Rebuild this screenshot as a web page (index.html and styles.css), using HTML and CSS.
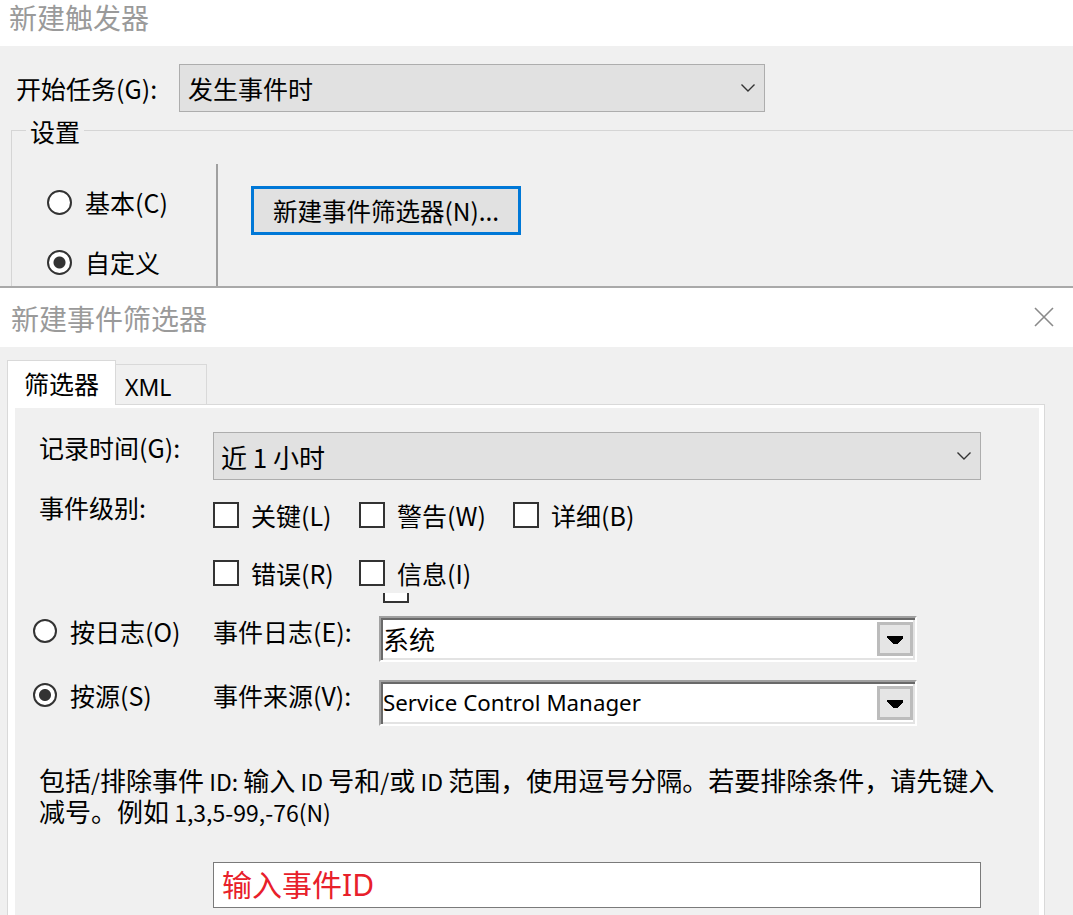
FILE: index.html
```html
<!DOCTYPE html>
<html lang="zh-CN">
<head>
<meta charset="utf-8">
<title>新建事件筛选器</title>
<link rel="stylesheet" href="styles.css">
</head>
<body>
<div class="win1">
  <div class="win1-title">新建触发器</div>
  <div class="win1-body">
    <div class="start-row">
      <span class="start-label">开始任务(G):</span>
      <div class="combo combo-start">
        <span>发生事件时</span>
        <svg class="chev" width="14" height="8" viewBox="0 0 14 8"><polyline points="0.5,0.5 7,7 13.5,0.5" fill="none" stroke="#333" stroke-width="1.4"/></svg>
      </div>
    </div>
    <div class="group">
      <div class="group-title">设置</div>
      <div class="group-body">
        <div class="radio-col">
          <div class="radio"><span class="circle"></span>基本(C)</div>
          <div class="radio"><span class="circle checked"></span>自定义</div>
        </div>
        <div class="group-right">
          <div class="btn-new">新建事件筛选器(N)...</div>
        </div>
      </div>
    </div>
  </div>
</div>

<div class="dlg">
  <div class="dlg-title">
    <span>新建事件筛选器</span>
    <svg class="close" width="20" height="20" viewBox="0 0 20 20"><path d="M1 1 L19 19 M19 1 L1 19" stroke="#8a8a8a" stroke-width="1.6" fill="none"/></svg>
  </div>
  <div class="dlg-body">
    <div class="tabs">
      <div class="tab tab-active">筛选器</div>
      <div class="tab tab-xml">XML</div>
    </div>
    <div class="panel">
      <div class="panel-inner">
        <div class="row row-time">
          <span class="lbl">记录时间(G):</span>
          <div class="combo combo-time">
            <span>近 1 小时</span>
            <svg class="chev" width="14" height="8" viewBox="0 0 14 8"><polyline points="0.5,0.5 7,7 13.5,0.5" fill="none" stroke="#333" stroke-width="1.4"/></svg>
          </div>
        </div>
        <div class="row row-level">
          <span class="lbl">事件级别:</span>
          <div class="checks">
            <div class="check-grid">
              <div class="check"><span class="box"></span>关键(L)</div>
              <div class="check"><span class="box"></span>警告(W)</div>
              <div class="check"><span class="box"></span>详细(B)</div>
              <div class="check"><span class="box"></span>错误(R)</div>
              <div class="check"><span class="box"></span>信息(I)</div>
            </div>
            <div class="peek"></div>
          </div>
        </div>
        <div class="row row-src row-log">
          <div class="radio2"><span class="circle small"></span>按日志(O)</div>
          <span class="lbl2">事件日志(E):</span>
          <div class="classic">
            <span class="classic-text">系统</span>
            <div class="drop"><svg width="16" height="8" viewBox="0 0 16 8" shape-rendering="crispEdges"><polygon points="0,0 16,0 16,2 10,8 6,8 0,2" fill="#000"/></svg></div>
          </div>
        </div>
        <div class="row row-src row-source">
          <div class="radio2"><span class="circle small checked"></span>按源(S)</div>
          <span class="lbl2">事件来源(V):</span>
          <div class="classic">
            <span class="classic-text latin">Service Control Manager</span>
            <div class="drop"><svg width="16" height="8" viewBox="0 0 16 8" shape-rendering="crispEdges"><polygon points="0,0 16,0 16,2 10,8 6,8 0,2" fill="#000"/></svg></div>
          </div>
        </div>
        <div class="desc">
          <div class="desc-line">包括<span class="lt">/</span>排除事件<span class="lt"> ID: </span>输入<span class="lt"> ID </span>号和<span class="lt">/</span>或<span class="lt"> ID </span>范围，使用逗号分隔。若要排除条件，请先键入</div>
          <div class="desc-line">减号。例如<span class="lt"> 1,3,5-99,-76(N)</span></div>
        </div>
        <div class="id-input">输入事件ID</div>
      </div>
    </div>
  </div>
</div>
</body>
</html>
```

FILE: styles.css
```css
* { box-sizing: border-box; }
html, body { margin: 0; padding: 0; }
body {
  width: 1073px;
  height: 915px;
  overflow: hidden;
  background: #fff;
  font-family: "Noto Sans CJK SC", "Noto Sans", sans-serif;
  font-size: 25px;
  color: #000;
}

/* ---------- window 1 ---------- */
.win1-title {
  height: 46px;
  padding-left: 9px;
  font-size: 28px;
  line-height: 34px;
  color: #9a9a9a;
}
.win1-body {
  height: 242px;
  background: #f0f0f0;
  border-bottom: 2px solid #a9a9a9;
  display: flex;
  flex-direction: column;
  overflow: hidden;
}
.start-row {
  display: flex;
  align-items: center;
  padding: 18px 0 0 16px;
}
.start-label {
  width: 163px;
  line-height: 34px;
}
.combo {
  display: flex;
  align-items: center;
  justify-content: space-between;
  background: #e1e1e1;
  border: 1px solid #adadad;
}
.combo-start {
  width: 586px;
  height: 48px;
  padding: 0 9px 0 8px;
  font-size: 25px;
}
.combo-time {
  width: 768px;
  height: 48px;
  padding: 0 9px 0 7px;
  font-size: 26px;
}
.chev { display: block; }

.group {
  flex: 1;
  margin: 18px 0 0 11px;
  border-top: 1px solid #d5d5d5;
  border-left: 1px solid #d5d5d5;
  display: flex;
  flex-direction: column;
}
.group-title {
  align-self: flex-start;
  margin: -17px 0 0 14px;
  padding: 0 4px;
  line-height: 34px;
  background: #f0f0f0;
}
.group-body {
  flex: 1;
  display: flex;
  padding-top: 16px;
}
.radio-col {
  width: 204px;
  padding-top: 18px;
  display: flex;
  flex-direction: column;
  gap: 20px;
}
.radio {
  height: 40px;
  display: flex;
  align-items: center;
  gap: 13px;
  padding-left: 35px;
}
.circle {
  width: 25px;
  height: 25px;
  border: 2px solid #333;
  border-radius: 50%;
  background: #fff;
  flex: none;
}
.circle.small { width: 24px; height: 24px; }
.circle.checked {
  background: radial-gradient(circle, #333 0, #333 5.5px, #fff 6.5px);
}
.group-right {
  flex: 1;
  border-left: 2px solid #a0a0a0;
  padding: 22px 0 0 33px;
}
.btn-new {
  width: 270px;
  height: 49px;
  border: 3px solid #0078d7;
  background: #e1e1e1;
  display: flex;
  align-items: center;
  justify-content: center;
  font-size: 24.5px;
}

/* ---------- dialog 2 ---------- */
.dlg-title {
  height: 59px;
  display: flex;
  align-items: center;
  justify-content: space-between;
  padding: 1px 19px 0 11px;
  font-size: 28px;
  color: #9a9a9a;
}
.close { display: block; margin-bottom: 2px; }
.dlg-body {
  height: 568px;
  background: #f0f0f0;
  padding: 13px 0 0 7px;
  overflow: hidden;
}
.tabs {
  display: flex;
  align-items: flex-end;
}
.tab {
  border: 1px solid #d9d9d9;
  border-bottom: none;
}
.tab-active {
  width: 109px;
  height: 45px;
  margin-bottom: -1px;
  background: #fff;
  position: relative;
  z-index: 1;
  display: flex;
  align-items: center;
  justify-content: center;
}
.tab-xml {
  width: 91px;
  height: 40px;
  border-left: none;
  padding: 5px 0 0 9px;
  line-height: 34px;
  font-family: "Noto Sans", sans-serif;
  font-size: 23px;
}
.panel {
  margin-right: 28px;
  border: 1px solid #d9d9d9;
  background: #fff;
  padding: 3px 5px 0 7px;
  height: 600px;
}
.panel-inner {
  background: #f0f0f0;
  height: 100%;
  padding-top: 24px;
}
.row {
  display: flex;
  align-items: flex-start;
}
.row-time, .row-level { padding-left: 24px; }
.lbl {
  width: 174px;
  line-height: 34px;
  flex: none;
}
.row-time .lbl { margin-top: -2px; }
.row-level { margin-top: 10px; }
.checks { margin-top: 8px; }
.check-grid {
  display: grid;
  grid-template-columns: 146px 154px auto;
  row-gap: 24px;
}
.check {
  display: flex;
  align-items: center;
  gap: 12px;
  line-height: 34px;
}
.box {
  width: 26px;
  height: 26px;
  border: 2px solid #333;
  background: #fff;
  flex: none;
}
.peek {
  margin: 3px 0 0 170px;
  width: 26px;
  height: 10px;
  border: 2px solid #333;
  border-top: none;
  background: #fff;
}
.row-src { padding-left: 18px; }
.row-log { margin-top: 11px; }
.row-source { margin-top: 16px; }
.radio2 {
  width: 180px;
  display: flex;
  align-items: center;
  gap: 13px;
  line-height: 34px;
  flex: none;
}
.lbl2 {
  width: 166px;
  line-height: 34px;
  flex: none;
}
.classic {
  margin-top: 2px;
  width: 538px;
  height: 46px;
  background: #fff;
  border-top: 2px solid #a0a0a0;
  border-left: 2px solid #a0a0a0;
  border-right: 2px solid #fff;
  border-bottom: 2px solid #fff;
  box-shadow: inset 2px 2px 0 #696969, inset -2px -2px 0 #e3e3e3;
  display: flex;
  align-items: center;
  justify-content: space-between;
  padding: 0 2px 0 2px;
}
.classic-text { line-height: 34px; font-size: 26px; }
.classic-text.latin {
  font-family: "Noto Sans", sans-serif;
  font-size: 22.3px;
}
.drop {
  width: 36px;
  height: 34px;
  border: 3px solid #bcbcbc;
  background: #e5e5e5;
  display: flex;
  align-items: center;
  justify-content: center;
  padding-top: 2px;
}
.drop svg { display: block; }
.desc {
  margin-top: 38px;
  padding-left: 24px;
  font-size: 26px;
}
.desc-line {
  height: 31px;
  line-height: 31px;
  white-space: nowrap;
}
.lt { font-size: 23px; }
.id-input {
  margin: 36px 0 0 198px;
  width: 768px;
  height: 46px;
  border: 1px solid #7a7a7a;
  background: #fff;
  padding-left: 8px;
  color: #e8202a;
  font-family: "Noto Sans", "Noto Sans CJK SC", sans-serif;
  font-size: 30px;
  line-height: 44px;
}
```
